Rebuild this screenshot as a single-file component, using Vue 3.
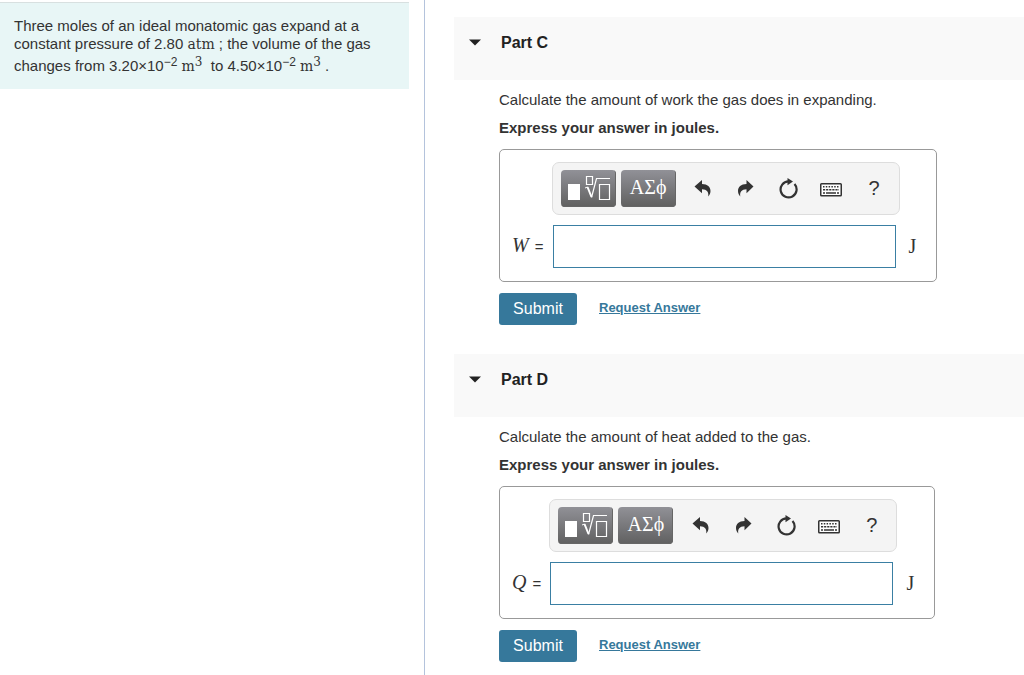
<script setup>
import { reactive } from 'vue'

const parts = reactive([
  {
    id: 'c',
    title: 'Part C',
    prompt: 'Calculate the amount of work the gas does in expanding.',
    symbol: 'W',
    answer: '',
    open: true,
  },
  {
    id: 'd',
    title: 'Part D',
    prompt: 'Calculate the amount of heat added to the gas.',
    symbol: 'Q',
    answer: '',
    open: true,
  },
])
</script>

<template>
  <div class="page">
    <aside class="side">
      <p class="problem">
        Three moles of an ideal monatomic gas expand at a constant pressure of 2.80
        <span class="unit">atm</span> ; the volume of the gas changes from
        3.20×10<sup>−2</sup> <span class="unit">m<sup>3</sup></span>&nbsp; to
        4.50×10<sup>−2</sup> <span class="unit">m<sup>3</sup></span> .
      </p>
    </aside>

    <main class="main">
      <section v-for="part in parts" :key="part.id" class="part">
        <h2 class="head">
          <button type="button" class="toggle" :aria-expanded="part.open" @click="part.open = !part.open">
            <svg class="caret" width="12" height="8" viewBox="0 0 12 8" aria-hidden="true">
              <path d="M0 0.500h12L6 6.500z" fill="#222" />
            </svg>
            {{ part.title }}
          </button>
        </h2>

        <div v-if="part.open" class="body">
          <p class="prompt">{{ part.prompt }}</p>
          <p class="prompt strong">Express your answer in joules.</p>

          <div class="answer">
            <div class="toolbar">
              <button type="button" class="dark" aria-label="Templates">
                <svg width="55" height="37" viewBox="0 0 55 37" aria-hidden="true">
                  <rect x="7" y="14" width="12" height="16" fill="#fff" />
                  <g fill="none" stroke="#fff">
                    <path d="M25.500 6.500h6v8h-6z" stroke-width="1.200" />
                    <path d="M24 18l2.500-1" stroke-width="1" />
                    <path d="M26.500 17l4 10" stroke-width="2" />
                    <path d="M30.500 27.500L35.500 8.500H49" stroke-width="1.200" />
                    <path d="M38.500 14.500h10v15h-10z" stroke-width="1.200" />
                  </g>
                </svg>
              </button>
              <button type="button" class="dark greek">ΑΣϕ</button>
              <button type="button" class="tool" aria-label="Undo">
                <svg width="20" height="20" viewBox="0 0 20 20" aria-hidden="true">
                  <path d="M2.500 7.500L10 1v4c5.500 0.200 8.500 3 8.500 7 0 2-0.800 4-2.300 5.500 0.700-4.500-1.200-7-6.200-7.200v4z" fill="#333" />
                </svg>
              </button>
              <button type="button" class="tool" aria-label="Redo">
                <svg width="20" height="20" viewBox="0 0 20 20" aria-hidden="true">
                  <path d="M18.500 7.500L11.500 1v4c-5.500 0.200-8.500 3-8.500 7 0 2 0.800 4 2.300 5.500-0.700-4.500 1.200-7 6.200-7.200v4z" fill="#333" />
                </svg>
              </button>
              <button type="button" class="tool" aria-label="Reset">
                <svg width="20" height="22" viewBox="0 0 20 22" aria-hidden="true">
                  <path d="M12.500 3.400H10.500A8 8 0 1 0 16.500 6" fill="none" stroke="#333" stroke-width="2.200" />
                  <path d="M9.500 0l5.500 3.500L9.500 7.200z" fill="#333" />
                </svg>
              </button>
              <button type="button" class="tool" aria-label="Keyboard shortcuts">
                <svg width="22" height="20" viewBox="0 0 22 20" aria-hidden="true">
                  <rect x="0.750" y="4.750" width="20.500" height="12" rx="0.800" fill="#fff" stroke="#333" stroke-width="1.500" />
                  <path d="M3 7.700h16" stroke="#333" stroke-width="1.500" stroke-dasharray="1.500 1.300" />
                  <path d="M3 10.700h16" stroke="#333" stroke-width="1.500" stroke-dasharray="2.200 0.900" />
                  <path d="M3 13.900h2M6 13.900h10M17 13.900h2" stroke="#333" stroke-width="1.500" />
                </svg>
              </button>
              <button type="button" class="tool help" aria-label="Help">?</button>
            </div>

            <label class="symbol" :for="'answer-' + part.id"><i>{{ part.symbol }}</i> =</label>
            <input :id="'answer-' + part.id" v-model="part.answer" class="field" type="text" autocomplete="off" />
            <span class="joule">J</span>
          </div>

          <div class="actions">
            <button type="button" class="submit">Submit</button>
            <a class="request" href="#request">Request Answer</a>
          </div>
        </div>
      </section>
    </main>
  </div>
</template>

<style>
body {
  margin: 0;
  background: #fff;
}
</style>

<style scoped>
.page {
  display: flex;
  min-height: 100vh;
  overflow: hidden;
  color: #333;
  font: 15px/18px "Liberation Sans", Arial, sans-serif;
}

.page button,
.page input {
  margin: 0;
  font-family: inherit;
}

.side {
  box-sizing: border-box;
  flex: 0 0 425px;
  padding: 2px 15px 0 0;
  border-right: 1px solid #b4c3dc;
}

.problem {
  margin: 0;
  padding: 14px 30px 14px 14px;
  border-top: 1px solid #d8e0e0;
  background: #e8f6f6;
}

.unit {
  font-family: "DejaVu Serif", serif;
  font-size: 14px;
}

.problem sup {
  font-size: 12px;
  line-height: 18px;
  vertical-align: 5px;
}

.main {
  flex: 1;
  min-width: 0;
  padding: 17px 0 0 29px;
}

.part {
  margin-bottom: 29px;
}

.head {
  box-sizing: border-box;
  height: 63px;
  margin: 0;
  padding: 13px 15px;
  background: #f9f9f9;
}

.toggle {
  display: flex;
  align-items: center;
  gap: 20px;
  padding: 0;
  border: 0;
  background: none;
  color: #222;
  font-size: 16px;
  font-weight: bold;
  line-height: 26px;
}

.body {
  padding: 11px 16px 0 45px;
}

.prompt {
  margin: 0 0 10px;
}

.strong {
  margin-bottom: 12px;
  font-weight: bold;
}

.answer {
  display: inline-grid;
  grid-template-columns: auto 343px auto;
  align-items: center;
  row-gap: 10px;
  padding: 12px 20px 13px 12px;
  border: 1px solid #999;
  border-radius: 5px;
  vertical-align: top;
}

.toolbar {
  display: flex;
  box-sizing: border-box;
  grid-row: 1;
  grid-column: 2;
  align-items: center;
  width: 348px;
  height: 53px;
  margin-left: -1px;
  padding-left: 8px;
  border: 1px solid #ddd;
  border-radius: 7px;
  background: #f4f4f4;
}

.symbol,
.field,
.joule {
  grid-row: 2;
}

.page .dark {
  flex: none;
  width: 55px;
  height: 37px;
  margin-right: 5px;
  padding: 0;
  border: 0;
  border-radius: 4px;
  background: linear-gradient(#919197, #606060);
  box-shadow: inset -1px -1px 0 #666;
  color: #fff;
}

.dark svg {
  display: block;
}

.page .greek {
  padding-bottom: 2px;
  font-family: "Liberation Serif", "DejaVu Serif", serif;
  font-size: 20px;
}

.tool {
  display: flex;
  flex: none;
  align-items: center;
  justify-content: center;
  width: 43px;
  height: 37px;
  padding: 0;
  border: 0;
  background: none;
  color: #333;
}

.help {
  font-size: 20px;
}

.symbol {
  grid-column: 1;
  padding: 0 9px 2px 0;
  white-space: nowrap;
}

.symbol i {
  margin-right: 2px;
  font-family: "Liberation Serif", serif;
  font-size: 20px;
}

.page .field {
  box-sizing: border-box;
  grid-column: 2;
  width: 100%;
  height: 43px;
  padding: 0 8px;
  border: 1px solid #3a7fa3;
  background: #fff;
  font-size: 16px;
}

.joule {
  grid-column: 3;
  padding: 0 0 2px 13px;
  font-family: "Liberation Serif", serif;
  font-size: 20px;
}

.actions {
  display: flex;
  align-items: center;
  gap: 22px;
  margin-top: 11px;
}

.submit {
  width: 78px;
  height: 32px;
  padding: 0;
  border: 0;
  border-radius: 3px;
  background: #36789b;
  color: #fff;
  font-size: 16px;
}

.request {
  padding-bottom: 2px;
  color: #36789b;
  font-size: 13px;
  font-weight: bold;
}
</style>
